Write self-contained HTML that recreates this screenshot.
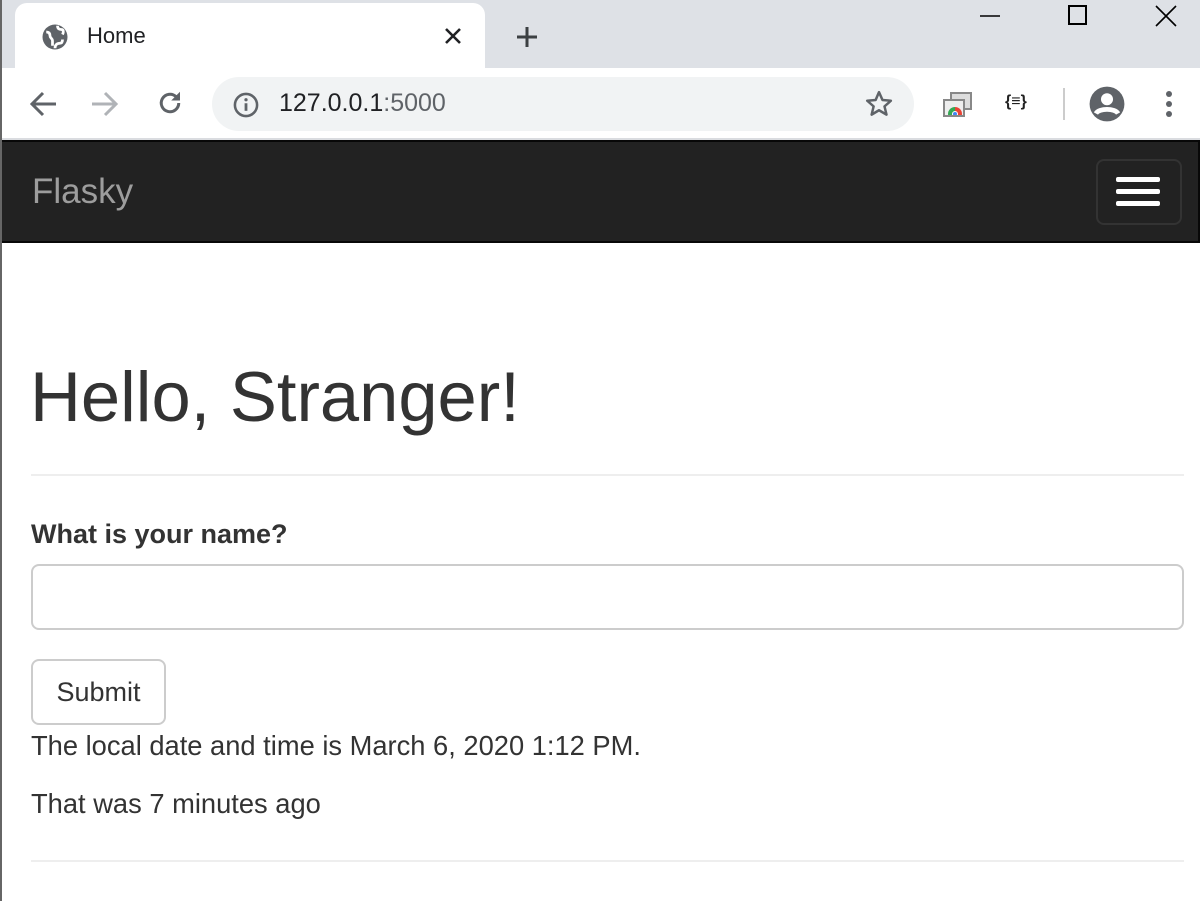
<!DOCTYPE html>
<html><head><meta charset="utf-8"><style>
*{margin:0;padding:0;box-sizing:border-box}
body{width:1200px;height:901px;overflow:hidden;background:#fff;font-family:"Liberation Sans",sans-serif;position:relative;color:#333}
.a{position:absolute}
</style></head><body>
<div class="a" style="left:0;top:0;width:1200px;height:68px;background:#dee1e6"></div>
<div class="a" style="left:15px;top:3px;width:470px;height:66px;background:#fff;border-radius:12px 12px 0 0"></div>
<svg class="a" style="left:40px;top:22px" width="30" height="30" viewBox="0 0 24 24"><circle cx="12" cy="12" r="10" fill="#5f6368"/><path d="M5 8c2 0 3 1 3 3s2 2 2 4v4M14 3c0 2 1 3 3 3s2 2 1 4M12 21c0-3 2-4 4-4s2-2 2-3" stroke="#fff" stroke-width="2.2" fill="none"/></svg>
<div class="a" style="left:87px;top:23px;font-size:22px;color:#202124">Home</div>
<svg class="a" style="left:443px;top:26px" width="20" height="20"><path d="M3 3L17 17M17 3L3 17" stroke="#202124" stroke-width="2.6"/></svg>
<svg class="a" style="left:515px;top:25px" width="24" height="24"><path d="M12 2V22M2 12H22" stroke="#3c4043" stroke-width="3"/></svg>
<svg class="a" style="left:978px;top:8px" width="24" height="16"><path d="M2 8H22" stroke="#000" stroke-width="1.5"/></svg>
<div class="a" style="left:1068px;top:5px;width:19px;height:20px;border:2px solid #000"></div>
<svg class="a" style="left:1154px;top:4px" width="24" height="24"><path d="M2 2L22 22M22 2L2 22" stroke="#000" stroke-width="1.6"/></svg>
<div class="a" style="left:0;top:68px;width:1200px;height:72px;background:#fff;border-bottom:2px solid #dadce0"></div>
<svg class="a" style="left:28px;top:90px" width="30" height="28"><path d="M28 14H4M15 3L4 14L15 25" stroke="#5f6368" stroke-width="3" fill="none"/></svg>
<svg class="a" style="left:90px;top:90px" width="30" height="28"><path d="M2 14H26M15 3L26 14L15 25" stroke="#b0b3b7" stroke-width="3" fill="none"/></svg>
<svg class="a" style="left:155px;top:88px" width="30" height="30" viewBox="0 0 24 24"><path d="M19 12a7 7 0 1 1-2.2-5.1" stroke="#5f6368" stroke-width="2.4" fill="none"/><path d="M20 3v7h-7z" fill="#5f6368"/></svg>
<div class="a" style="left:212px;top:77px;width:702px;height:54px;background:#f1f3f4;border-radius:27px"></div>
<svg class="a" style="left:232px;top:91px" width="28" height="28" viewBox="0 0 24 24"><circle cx="12" cy="12" r="9.5" stroke="#5f6368" stroke-width="2.2" fill="none"/><path d="M12 10.5V17" stroke="#5f6368" stroke-width="2.4"/><circle cx="12" cy="7.5" r="1.4" fill="#5f6368"/></svg>
<div class="a" style="left:279px;top:89px;font-size:25px;color:#202124">127.0.0.1<span style="color:#5f6368">:5000</span></div>
<svg class="a" style="left:864px;top:89px" width="30" height="30" viewBox="0 0 24 24"><path d="M12 2.5l2.8 6.3 6.7.6-5.1 4.5 1.6 6.6L12 17l-5.9 3.5 1.6-6.6L2.6 9.4l6.7-.6z" stroke="#5f6368" stroke-width="2" fill="none" stroke-linejoin="round"/></svg>
<div class="a" style="left:950px;top:92px;width:22px;height:18px;border:2px solid #888;background:#ddd"></div>
<div class="a" style="left:943px;top:99px;width:22px;height:18px;border:2px solid #888;background:#eee;overflow:hidden"><div style="position:absolute;left:3px;top:6px;width:14px;height:14px;border-radius:50%;background:conic-gradient(#ea4335 0 33%,#fbbc04 0 66%,#34a853 0)"></div><div style="position:absolute;left:7px;top:10px;width:6px;height:6px;border-radius:50%;background:#4285f4;border:1px solid #fff"></div></div>
<div class="a" style="left:1005px;top:93px;font-size:16px;font-weight:bold;color:#222">{≡}</div>
<div class="a" style="left:1063px;top:88px;width:2px;height:32px;background:#ccc"></div>
<svg class="a" style="left:1088px;top:85px" width="38" height="38" viewBox="0 0 24 24"><circle cx="12" cy="12" r="11" fill="#5f6368"/><circle cx="12" cy="9" r="3.8" fill="#fff"/><path d="M5 18c2-3.5 12-3.5 14 0" stroke="#fff" stroke-width="3" fill="none"/></svg>
<div class="a" style="left:1166px;top:91px;width:6px;height:6px;border-radius:3px;background:#5f6368"></div>
<div class="a" style="left:1166px;top:101px;width:6px;height:6px;border-radius:3px;background:#5f6368"></div>
<div class="a" style="left:1166px;top:111px;width:6px;height:6px;border-radius:3px;background:#5f6368"></div>
<div class="a" style="left:0;top:140px;width:1200px;height:103px;background:#222;border:2px solid #080808"></div>
<div class="a" style="left:32px;top:172px;font-size:35px;color:#9d9d9d">Flasky</div>
<div class="a" style="left:1096px;top:159px;width:86px;height:66px;border:2px solid #333;border-radius:8px"></div>
<div class="a" style="left:1116px;top:177px;width:44px;height:5px;border-radius:2px;background:#fff"></div>
<div class="a" style="left:1116px;top:189px;width:44px;height:5px;border-radius:2px;background:#fff"></div>
<div class="a" style="left:1116px;top:201px;width:44px;height:5px;border-radius:2px;background:#fff"></div>
<div class="a" style="left:0;top:0;width:2px;height:901px;background:#666"></div>
<div class="a" style="left:30px;top:362px;font-size:70.5px;color:#333;line-height:1">Hello, Stranger!</div>
<div class="a" style="left:31px;top:474px;width:1153px;height:2px;background:#eee"></div>
<div class="a" style="left:31px;top:519px;font-size:27px;font-weight:bold;color:#333">What is your name?</div>
<div class="a" style="left:31px;top:564px;width:1153px;height:66px;border:2px solid #ccc;border-radius:8px"></div>
<div class="a" style="left:31px;top:659px;width:135px;height:66px;border:2px solid #ccc;border-radius:8px;font-size:27px;text-align:center;line-height:62px;color:#333">Submit</div>
<div class="a" style="left:31px;top:730px;font-size:27.3px;color:#333">The local date and time is March 6, 2020 1:12 PM.</div>
<div class="a" style="left:31px;top:788px;font-size:27.3px;color:#333">That was 7 minutes ago</div>
<div class="a" style="left:31px;top:860px;width:1153px;height:2px;background:#eee"></div>
</body></html>
